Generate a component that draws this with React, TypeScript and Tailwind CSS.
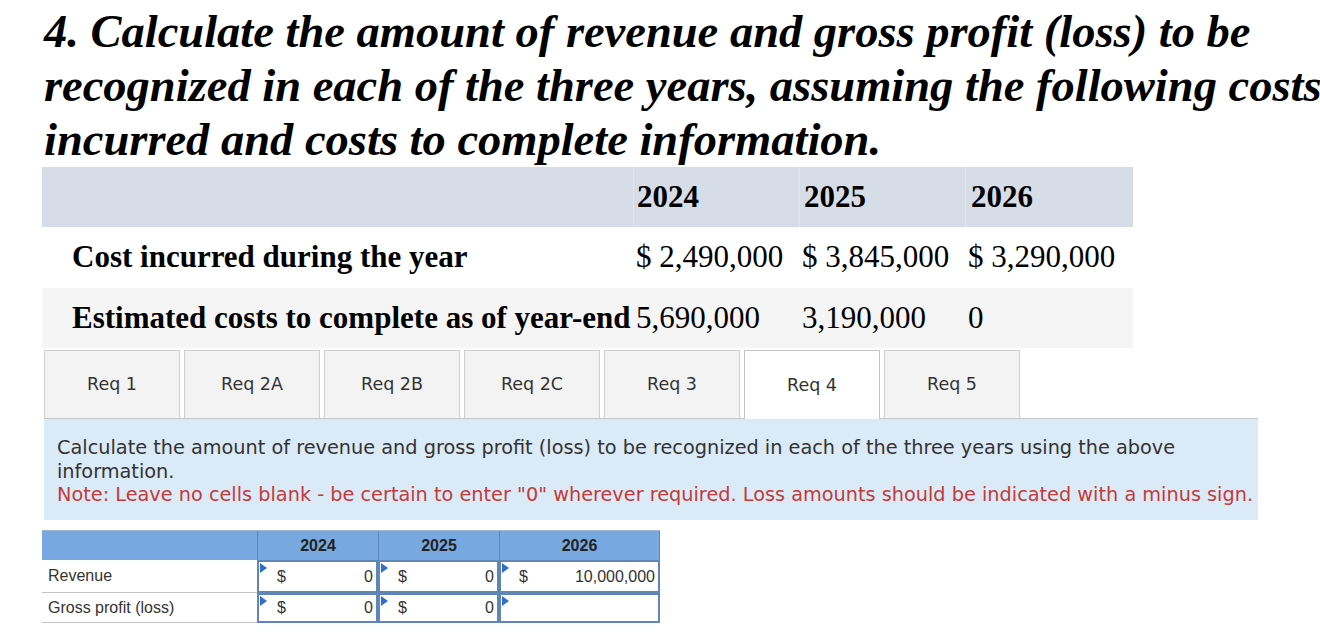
import React from "react";

const serif = { fontFamily: '"Liberation Serif", "Times New Roman", serif' };

const tabs = ["Req 1", "Req 2A", "Req 2B", "Req 2C", "Req 3", "Req 4", "Req 5"];

const Marker = () => (
  <span className="absolute left-[1px] top-[1px] w-0 h-0 border-t-[5px] border-b-[5px] border-l-[7px] border-t-transparent border-b-transparent border-l-[#2f6fcc]" />
);

const InputCell = ({ value, dollar = true }: { value?: string; dollar?: boolean }) => (
  <div className="relative h-full border-2 border-[#5f86b6] bg-white flex items-center justify-between pl-[18px] pr-[3px] text-[16px] text-[#333]">
    <Marker />
    <span>{dollar ? "$" : ""}</span>
    <span>{value}</span>
  </div>
);

export default function App() {
  return (
    <div className="w-[1320px] h-[633px] bg-white overflow-hidden">
      {/* question heading */}
      <h1
        className="pl-[44px] pt-[5px] text-[46.5px] leading-[54px] font-bold italic text-black whitespace-nowrap"
        style={serif}
      >
        <div>4. Calculate the amount of revenue and gross profit (loss) to be</div>
        <div>recognized in each of the three years, assuming the following costs</div>
        <div>incurred and costs to complete information.</div>
      </h1>

      {/* given data */}
      <div className="ml-[42px] w-[1091px] text-black" style={serif}>
        <div className="grid grid-cols-[591px_166px_166px_168px] h-[60px] bg-[#d7dde6] items-center text-[31px] font-bold">
          <div />
          <div className="pl-[3px] border-l border-[#e2e6ec] h-full flex items-center">2024</div>
          <div className="pl-[4px] border-l border-[#e2e6ec] h-full flex items-center">2025</div>
          <div className="pl-[5px] border-l border-[#e2e6ec] h-full flex items-center">2026</div>
        </div>
        <div className="grid grid-cols-[591px_166px_166px_168px] h-[61px] items-center text-[31px]">
          <div className="pl-[30px] font-bold whitespace-nowrap">Cost incurred during the year</div>
          <div className="pl-[3px] whitespace-nowrap">$ 2,490,000</div>
          <div className="pl-[3px] whitespace-nowrap">$ 3,845,000</div>
          <div className="pl-[3px] whitespace-nowrap">$ 3,290,000</div>
        </div>
        <div className="grid grid-cols-[591px_166px_166px_168px] h-[60px] bg-[#f5f5f5] items-center text-[31px]">
          <div className="pl-[30px] font-bold whitespace-nowrap">Estimated costs to complete as of year-end</div>
          <div className="pl-[3px]">5,690,000</div>
          <div className="pl-[3px]">3,190,000</div>
          <div className="pl-[3px]">0</div>
        </div>
      </div>

      {/* requirement tabs */}
      <div
        className="ml-[44px] mt-[2px] w-[1214px]"
        style={{ fontFamily: '"DejaVu Sans", Verdana, sans-serif' }}
      >
        <div className="flex gap-[4px] h-[69px] border-b border-[#c6c6c6] items-end">
          {tabs.map((t) => (
            <div
              key={t}
              className={
                t === "Req 4"
                  ? "w-[136px] h-[69px] -mb-px bg-white border border-b-0 border-[#c6c6c6] flex items-center justify-center text-[17.5px] text-[#333]"
                  : "w-[136px] h-[68px] bg-[#f3f3f3] border border-b-0 border-[#cfcfcf] flex items-center justify-center text-[17.5px] text-[#333]"
              }
            >
              {t}
            </div>
          ))}
        </div>
        <div className="bg-[#dbeaf7] h-[101px] pl-[13px] pt-[17px] text-[19.3px] leading-[23.5px]">
          <p className="text-[#333]">
            Calculate the amount of revenue and gross profit (loss) to be recognized in each of the three years using the above information.
          </p>
          <p className="text-[#c43a3a] whitespace-nowrap">
            Note: Leave no cells blank - be certain to enter "0" wherever required. Loss amounts should be indicated with a minus sign.
          </p>
        </div>
      </div>

      {/* answer table */}
      <div
        className="ml-[42px] mt-[10px] w-[618px]"
        style={{ fontFamily: '"Liberation Sans", Arial, sans-serif' }}
      >
        <div className="grid grid-cols-[215px_121px_121px_161px] h-[30px] bg-[#78a8e0] border-t border-[#9fb6cf] text-[16px] font-bold text-[#222]">
          <div />
          <div className="border-l border-[#5f86b6] flex items-center justify-center">2024</div>
          <div className="border-l border-[#5f86b6] flex items-center justify-center">2025</div>
          <div className="border-x border-[#5f86b6] flex items-center justify-center">2026</div>
        </div>
        <div className="grid grid-cols-[215px_121px_121px_161px] h-[33px] text-[16px] text-[#333]">
          <div className="pl-[6px] flex items-center border-b border-[#c4c4c4]">Revenue</div>
          <InputCell value="0" />
          <InputCell value="0" />
          <InputCell value="10,000,000" />
        </div>
        <div className="grid grid-cols-[215px_121px_121px_161px] h-[30px] text-[16px] text-[#333]">
          <div className="pl-[6px] flex items-center border-b border-[#c4c4c4]">Gross profit (loss)</div>
          <InputCell value="0" />
          <InputCell value="0" />
          <InputCell dollar={false} />
        </div>
      </div>
    </div>
  );
}
